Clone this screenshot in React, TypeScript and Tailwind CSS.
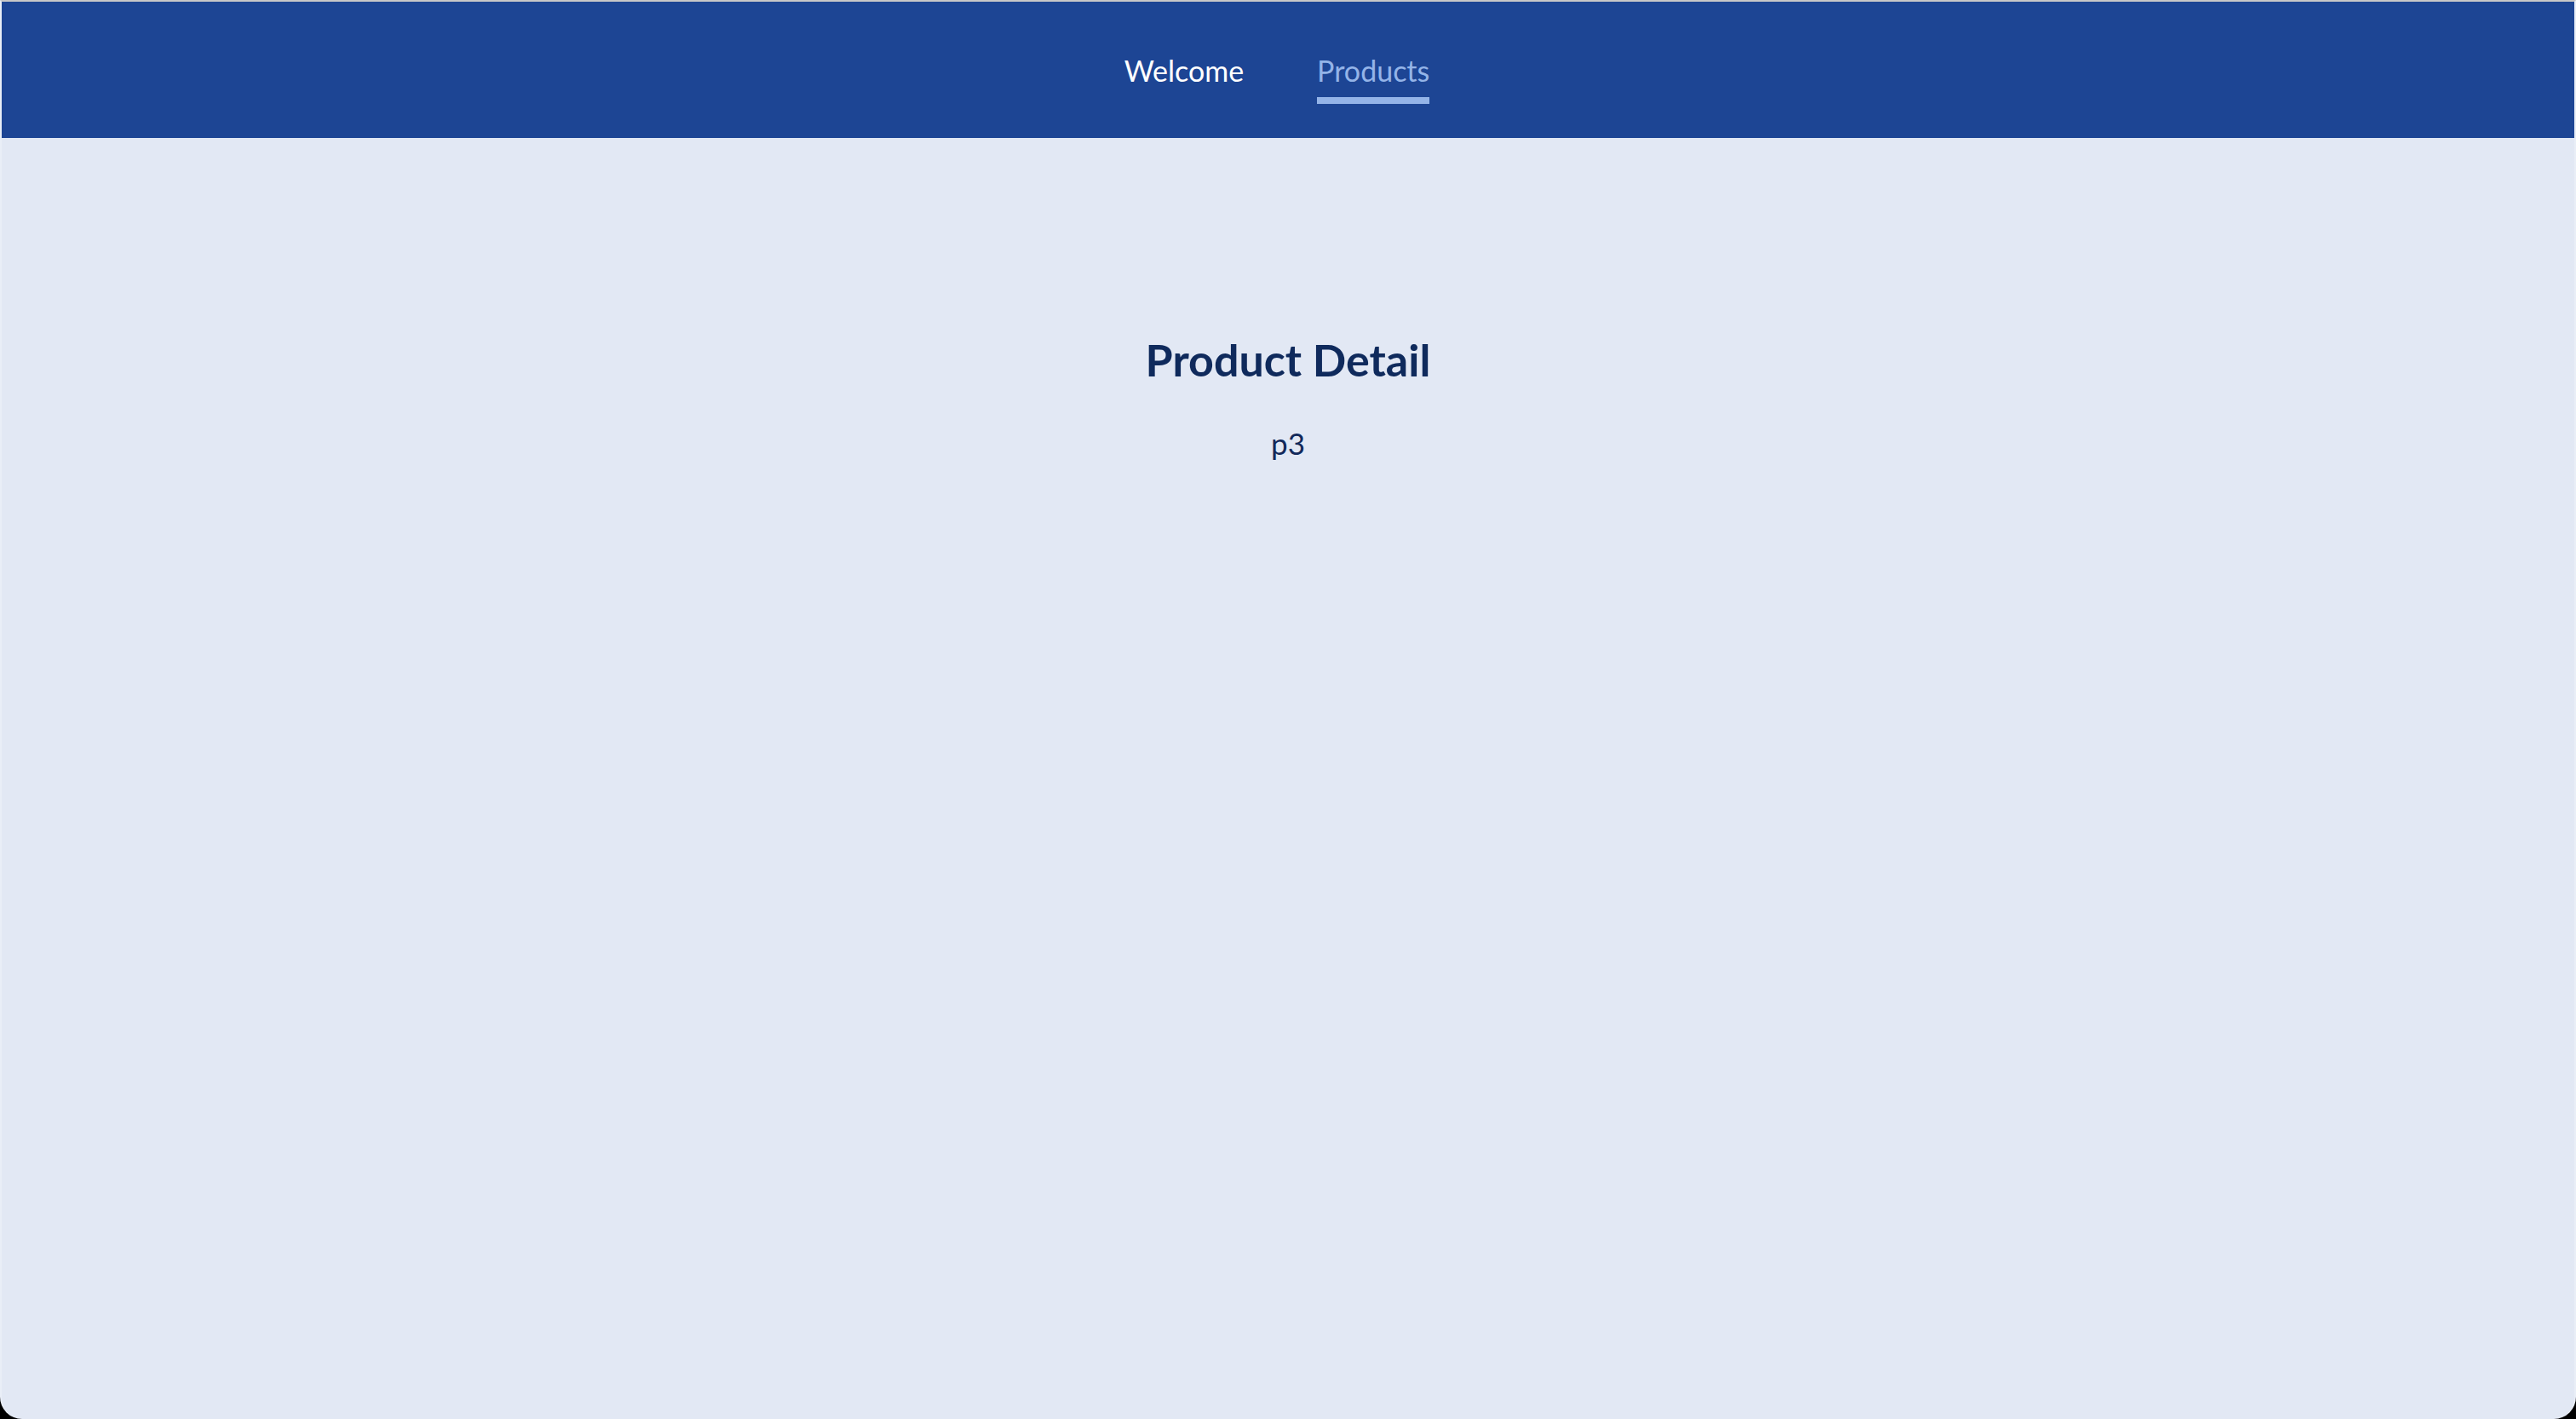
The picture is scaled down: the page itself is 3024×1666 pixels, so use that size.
export default function App() {
  const font = { fontFamily: "Lato, 'Noto Sans', sans-serif" };
  return (
    <div className="h-[1666px] w-[3024px] bg-black" style={font}>
      <div className="flex h-full flex-col overflow-hidden rounded-b-[26px] border-t-2 border-x-2 border-t-[#c8c8c8] border-x-white/25 bg-[#e2e8f4]">
        <header className="flex h-[160px] shrink-0 items-center justify-center bg-[#1d4594]">
          <nav className="mr-[26px] flex items-start gap-[86px] pt-[18px]">
            <a className="text-[34px] leading-[44px] text-white">Welcome</a>
            <a className="border-b-[8px] border-[#94b4e8] pb-[9px] text-[34px] leading-[44px] text-[#94b4e8]">
              Products
            </a>
          </nav>
        </header>
        <main className="flex flex-col items-center pt-[225px]">
          <h1 className="text-[52px] font-bold leading-[70px] text-[#0f2a5c]">
            Product Detail
          </h1>
          <p className="mt-[39px] text-[35px] leading-[48px] text-[#12295a]">p3</p>
        </main>
      </div>
    </div>
  );
}
